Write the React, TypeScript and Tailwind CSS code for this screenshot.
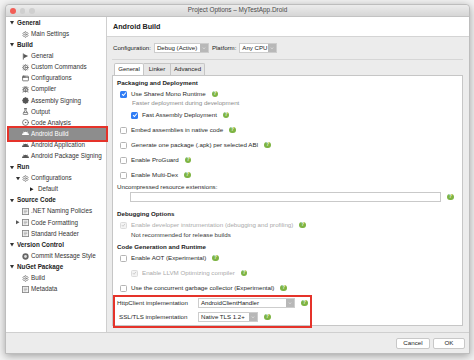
import type { ReactNode } from 'react';
import { Settings, Cog, AppWindow, Bug, BadgeCheck, FlaskConical, CircleDot } from 'lucide-react';
import { FaAndroid } from 'react-icons/fa';

type NavRow = {
  label: string;
  kind: 'section' | 'item' | 'leaf';
  icon?: ReactNode;
  expander?: 'down' | 'right';
  selected?: boolean;
};

const ic = 'h-[7px] w-[7px] text-[#777]';

function Down() {
  return (
    <svg viewBox="0 0 6 5" className="h-[3.5px] w-[4px]">
      <path d="M0 0h6L3 5z" fill="#333" />
    </svg>
  );
}

function Right({ dark }: { dark?: boolean }) {
  return (
    <svg viewBox="0 0 5 6" className="h-[4.5px] w-[3.5px]">
      <path d="M0 0v6l5-3z" fill={dark ? '#222' : '#555'} />
    </svg>
  );
}

function Doc() {
  return (
    <svg viewBox="0 0 8 8" className="h-[7px] w-[7px]">
      <rect x="0.5" y="0.5" width="7" height="7" fill="#f4f4f4" stroke="#888" />
      <path d="M2 2.5h4M2 4h4M2 5.5h3" stroke="#999" strokeWidth="0.7" />
    </svg>
  );
}

function Flag() {
  return (
    <svg viewBox="0 0 8 8" className="h-[7px] w-[7px]">
      <path d="M1.5 0.5v7" stroke="#555" strokeWidth="1" />
      <path d="M2 1l5 2.5L2 6z" fill="#555" />
    </svg>
  );
}

function Commit() {
  return (
    <svg viewBox="0 0 8 8" className="h-[7px] w-[7px]">
      <circle cx="4" cy="4" r="3.6" fill="#666" />
      <circle cx="4" cy="4" r="1.6" fill="#ddd" />
    </svg>
  );
}

const nav: NavRow[] = [
  { label: 'General', kind: 'section' },
  { label: 'Main Settings', kind: 'item', icon: <Settings className={ic} strokeWidth={2.5} /> },
  { label: 'Build', kind: 'section' },
  { label: 'General', kind: 'item', icon: <Flag /> },
  { label: 'Custom Commands', kind: 'item', icon: <Cog className={ic} strokeWidth={2.5} /> },
  { label: 'Configurations', kind: 'item', icon: <AppWindow className="h-[7px] w-[7px] text-[#555]" strokeWidth={2.5} /> },
  { label: 'Compiler', kind: 'item', icon: <Bug className="h-[7px] w-[7px] text-[#555]" strokeWidth={2.5} /> },
  { label: 'Assembly Signing', kind: 'item', icon: <BadgeCheck className="h-[7px] w-[7px] fill-[#555] text-[#555]" strokeWidth={2} /> },
  { label: 'Output', kind: 'item', icon: <FlaskConical className="h-[7px] w-[7px] text-[#555]" strokeWidth={2.5} /> },
  { label: 'Code Analysis', kind: 'item', icon: <CircleDot className="h-[7px] w-[7px] text-[#555]" strokeWidth={2.5} /> },
  { label: 'Android Build', kind: 'item', icon: <FaAndroid className="h-[7px] w-[7px] text-white" />, selected: true },
  { label: 'Android Application', kind: 'item', icon: <FaAndroid className="h-[7px] w-[7px] text-[#555]" /> },
  { label: 'Android Package Signing', kind: 'item', icon: <FaAndroid className="h-[7px] w-[7px] text-[#555]" /> },
  { label: 'Run', kind: 'section' },
  { label: 'Configurations', kind: 'item', icon: <Settings className={ic} strokeWidth={2.5} />, expander: 'down' },
  { label: 'Default', kind: 'leaf' },
  { label: 'Source Code', kind: 'section' },
  { label: '.NET Naming Policies', kind: 'item', icon: <Doc /> },
  { label: 'Code Formatting', kind: 'item', icon: <Doc />, expander: 'right' },
  { label: 'Standard Header', kind: 'item', icon: <Doc /> },
  { label: 'Version Control', kind: 'section' },
  { label: 'Commit Message Style', kind: 'item', icon: <Commit /> },
  { label: 'NuGet Package', kind: 'section' },
  { label: 'Build', kind: 'item', icon: <Settings className={ic} strokeWidth={2.5} /> },
  { label: 'Metadata', kind: 'item', icon: <Doc /> },
];

function SideRow({ row }: { row: NavRow }) {
  if (row.kind === 'section') {
    return (
      <div className="flex h-[11.1px] items-center pl-[4px] text-[6.3px] font-bold text-[#222]">
        <span className="flex w-[7px] items-center">
          <Down />
        </span>
        <span>{row.label}</span>
      </div>
    );
  }
  if (row.kind === 'leaf') {
    return (
      <div className="flex h-[11.1px] items-center pl-[24px] text-[6.3px] text-[#333]">
        <span className="flex w-[5px] items-center">
          <Right dark />
        </span>
        <span className="ml-[3px]">{row.label}</span>
      </div>
    );
  }
  return (
    <div className="relative flex h-[11.1px] items-center pl-[10px] text-[6.3px]">
      {row.selected && (
        <>
          <div className="absolute inset-y-0 left-[3px] right-0 bg-[#8d8d8d]" />
          <div className="absolute -bottom-[2.5px] -top-[2.5px] left-[1px] -right-[2px] z-10 border-2 border-[#e5332a]" />
        </>
      )}
      <span className="relative flex w-[6px] items-center">
        {row.expander === 'down' && <Down />}
        {row.expander === 'right' && <Right />}
      </span>
      <span className="relative flex w-[7px] items-center justify-center">{row.icon}</span>
      <span className={`relative ml-[2px] ${row.selected ? 'text-white' : 'text-[#333]'}`}>{row.label}</span>
    </div>
  );
}

function Help() {
  return (
    <span className="ml-[6px] flex h-[6.5px] w-[6.5px] shrink-0 items-center justify-center rounded-full bg-[#7db443] text-[4.5px] font-bold leading-none text-white">
      ?
    </span>
  );
}

function Box({ state }: { state: 'on' | 'off' | 'dim' }) {
  if (state === 'on') {
    return (
      <span className="flex h-[7px] w-[7px] shrink-0 items-center justify-center rounded-[1.5px] bg-[#2f7cf5]">
        <svg viewBox="0 0 8 8" className="h-[6px] w-[6px]">
          <path d="M1.4 4.2 3.2 6 6.6 2" fill="none" stroke="white" strokeWidth="1.4" />
        </svg>
      </span>
    );
  }
  if (state === 'dim') {
    return (
      <span className="flex h-[7px] w-[7px] shrink-0 items-center justify-center rounded-[1.5px] border border-[#dcdcdc] bg-[#f3f3f3]">
        <svg viewBox="0 0 8 8" className="h-[6px] w-[6px]">
          <path d="M1.4 4.2 3.2 6 6.6 2" fill="none" stroke="#c4c4c4" strokeWidth="1.3" />
        </svg>
      </span>
    );
  }
  return <span className="h-[7px] w-[7px] shrink-0 rounded-[1.5px] border border-[#b4b4b4] bg-white" />;
}

function Check({
  state,
  label,
  dim,
  indent,
  mt,
}: {
  state: 'on' | 'off' | 'dim';
  label: string;
  dim?: boolean;
  indent?: boolean;
  mt: string;
}) {
  return (
    <div className={`flex h-[10px] items-center ${mt} ${indent ? 'pl-[14px]' : 'pl-[3px]'}`}>
      <Box state={state} />
      <span className={`ml-[4px] ${dim ? 'text-[#aaa]' : 'text-[#2a2a2a]'}`}>{label}</span>
      <Help />
    </div>
  );
}

function Popup({ value, w }: { value: string; w: string }) {
  return (
    <div className={`flex h-[10px] ${w} items-stretch border border-[#cdcdcd] bg-white`}>
      <span className="flex flex-1 items-center pl-[2px] text-[6.1px] text-[#222]">{value}</span>
      <span className="flex w-[8px] items-center justify-center bg-[#b8b8b8]">
        <svg viewBox="0 0 6 6" className="h-[4px] w-[4px]">
          <path d="M1.5 2.5 3 4 4.5 2.5" fill="none" stroke="white" strokeWidth="0.9" />
        </svg>
      </span>
    </div>
  );
}

function Heading({ children, mt }: { children: ReactNode; mt: string }) {
  return <div className={`flex h-[8px] items-center ${mt} font-bold text-[#222]`}>{children}</div>;
}

export default function App() {
  return (
    <div className="h-[360px] w-[474px] overflow-hidden bg-[#f3f3f3] pt-[4px] font-['Liberation_Sans',Arial,sans-serif] leading-none">
      <div className="ml-[5px] flex h-[350px] w-[465px] flex-col overflow-visible rounded-t-[4px] border border-[#bdbdbd] bg-[#ececec] shadow-[0_2px_8px_rgba(0,0,0,0.35)]">
        {/* title bar */}
        <div className="relative flex h-[12px] shrink-0 items-center justify-center rounded-t-[4px] border-b border-[#c3c3c3] bg-gradient-to-b from-[#ececec] to-[#d6d6d6]">
          <div className="absolute left-[4px] top-[3px] flex gap-[4px]">
            <span className="h-[5.5px] w-[5.5px] rounded-full bg-[#f25d56]" />
            <span className="h-[5.5px] w-[5.5px] rounded-full bg-[#cfcfcf]" />
            <span className="h-[5.5px] w-[5.5px] rounded-full bg-[#cfcfcf]" />
          </div>
          <span className="text-[6.4px] text-[#4a4a4a]">Project Options – MyTestApp.Droid</span>
        </div>

        <div className="flex h-[315px] shrink-0">
          {/* sidebar */}
          <div className="w-[101px] shrink-0 border-r border-[#cfcfcf] bg-white pt-[0.5px]">
            {nav.map((row, i) => (
              <SideRow key={i} row={row} />
            ))}
          </div>

          {/* right panel */}
          <div className="flex flex-1 flex-col">
            <div className="flex h-[20px] shrink-0 items-center border-b border-[#d4d4d4] bg-white pl-[6px] text-[7.2px] font-bold text-[#222]">
              Android Build
            </div>
            <div className="pl-[5px] pr-[6px]">
              <div className="flex h-[23px] items-center border-b border-[#d6d6d6] pl-[1px] text-[6.1px] text-[#222]">
                <span>Configuration:</span>
                <span className="ml-[3px]">
                  <Popup value="Debug (Active)" w="w-[55px]" />
                </span>
                <span className="ml-[3px]">Platform:</span>
                <span className="ml-[3px]">
                  <Popup value="Any CPU" w="w-[38px]" />
                </span>
              </div>

              <div className="mt-[3px] flex h-[12px] pl-[2px] text-[6.1px] text-[#222]">
                <div className="flex w-[30px] items-center justify-center rounded-t-[2px] border border-b-0 border-[#c6c6c6] bg-white">General</div>
                <div className="flex w-[27px] items-center justify-center border-t border-r border-[#c6c6c6] bg-[#e7e7e7]">Linker</div>
                <div className="flex w-[34px] items-center justify-center rounded-tr-[2px] border-t border-r border-[#c6c6c6] bg-[#e7e7e7]">Advanced</div>
              </div>

              <div className="flex h-[251px] flex-col border border-[#c6c6c6] bg-white pl-[4px] text-[6.2px] text-[#2a2a2a] *:shrink-0">
                <Heading mt="mt-[3px]">Packaging and Deployment</Heading>
                <Check state="on" label="Use Shared Mono Runtime" mt="mt-[2px]" />
                <div className="flex h-[8px] items-center pl-[15px] text-[#8c8c8c]">Faster deployment during development</div>
                <Check state="on" label="Fast Assembly Deployment" indent mt="mt-[3px]" />
                <Check state="off" label="Embed assemblies in native code" mt="mt-[5px]" />
                <Check state="off" label="Generate one package (.apk) per selected ABI" mt="mt-[5px]" />
                <Check state="off" label="Enable ProGuard" mt="mt-[5px]" />
                <Check state="off" label="Enable Multi-Dex" mt="mt-[5px]" />
                <div className="mt-[3px] flex h-[8px] items-center">Uncompressed resource extensions:</div>
                <div className="mt-[1px] flex h-[10px] items-center pl-[13px]">
                  <div className="h-[10px] w-[311px] border border-[#c9c9c9] bg-white" />
                  <Help />
                </div>
                <Heading mt="mt-[8px]">Debugging Options</Heading>
                <Check state="dim" label="Enable developer instrumentation (debugging and profiling)" dim mt="mt-[2px]" />
                <div className="mt-[1px] flex h-[8px] items-center pl-[14px] text-[#3a3a3a]">Not recommended for release builds</div>
                <Heading mt="mt-[4px]">Code Generation and Runtime</Heading>
                <Check state="off" label="Enable AOT (Experimental)" mt="mt-[2px]" />
                <Check state="dim" label="Enable LLVM Optimizing compiler" dim indent mt="mt-[5px]" />
                <Check state="off" label="Use the concurrent garbage collector (Experimental)" mt="mt-[5px]" />
                <div className="-ml-[4px] mt-[2px] flex w-[199px] flex-col gap-[2px] border-2 border-[#e5332a] pb-[3px] pl-[2px]">
                  <div className="flex h-[12px] items-center">
                    <span className="w-[81px]">HttpClient implementation</span>
                    <Popup value="AndroidClientHandler" w="w-[97px]" />
                    <Help />
                  </div>
                  <div className="flex h-[12px] items-center">
                    <span className="w-[81px] pl-[2px]">SSL/TLS implementation</span>
                    <Popup value="Native TLS 1.2+" w="w-[60px]" />
                    <Help />
                  </div>
                </div>
              </div>
            </div>
          </div>
        </div>

        {/* bottom bar */}
        <div className="flex flex-1 items-center justify-end gap-[3px] border-t border-[#cfcfcf] bg-[#ececec] pr-[4px] text-[6.2px] text-[#222]">
          <button className="flex h-[11px] w-[34px] items-center justify-center rounded-[2px] border border-[#c8c8c8] bg-white">Cancel</button>
          <button className="flex h-[11px] w-[32px] items-center justify-center rounded-[2px] border border-[#c8c8c8] bg-white">OK</button>
        </div>
      </div>
    </div>
  );
}
